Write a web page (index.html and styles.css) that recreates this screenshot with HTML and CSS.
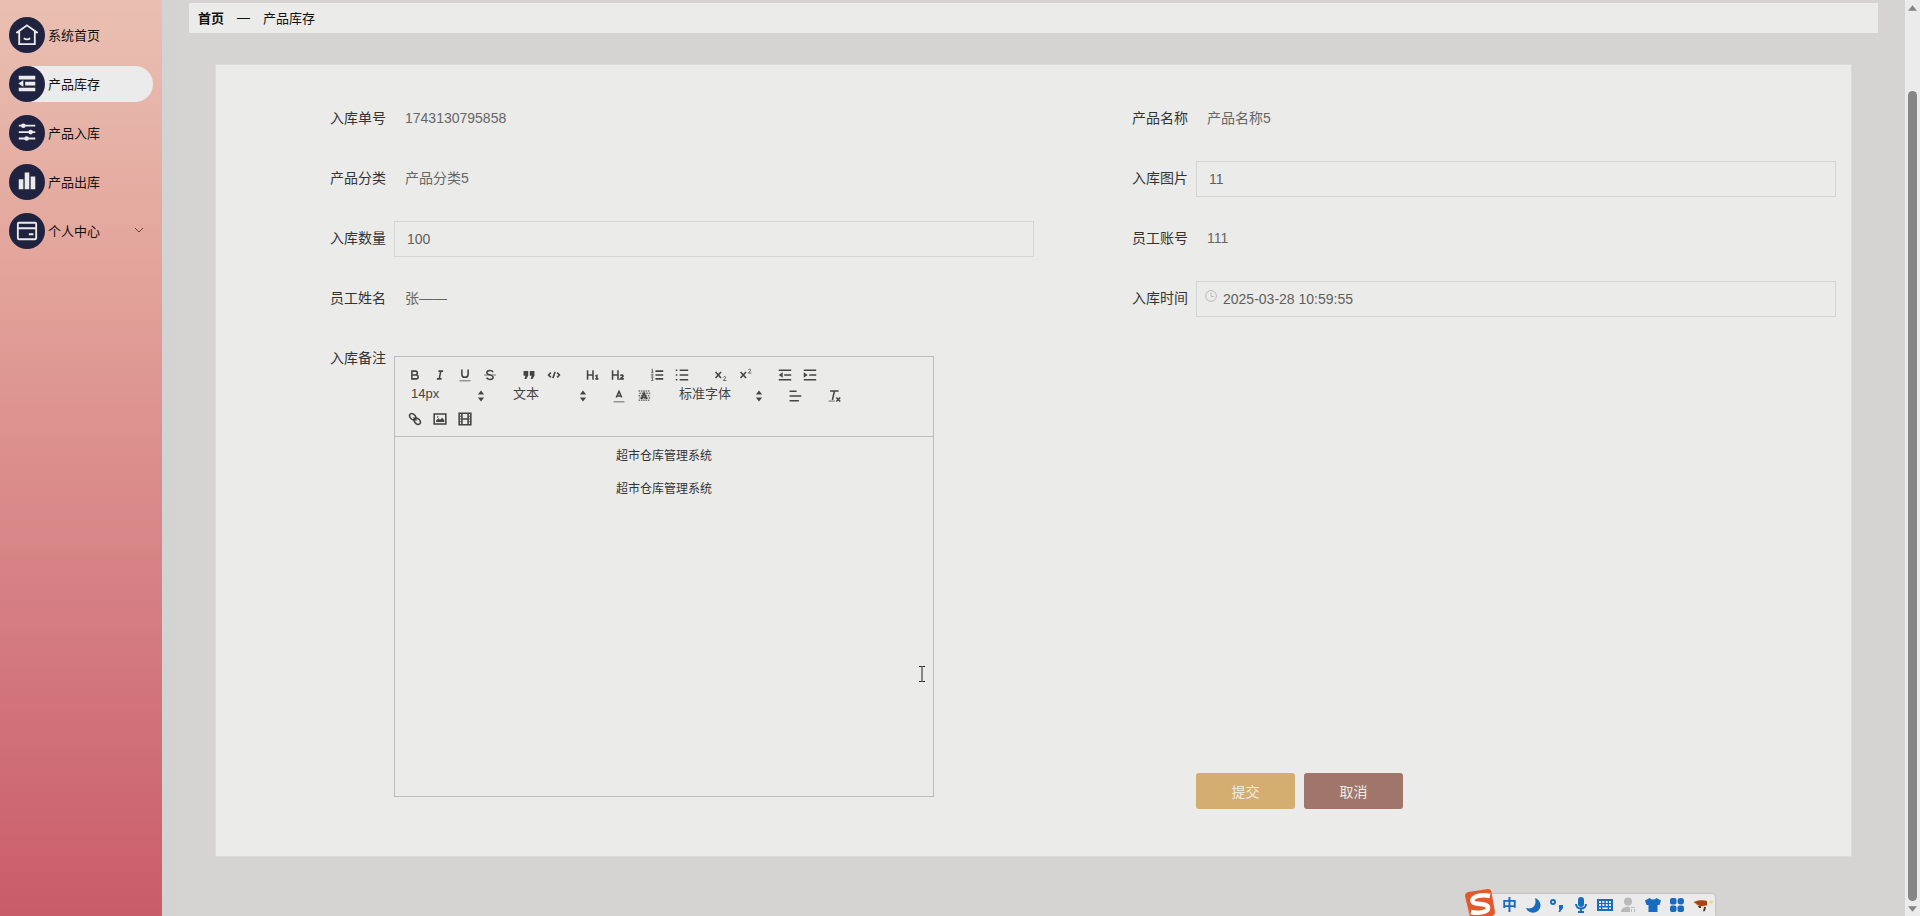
FILE: index.html
```
<!DOCTYPE html>
<html lang="zh-CN">
<head>
<meta charset="utf-8">
<meta name="viewport" content="width=device-width, initial-scale=1.0">
<title>产品库存</title>
<link rel="stylesheet" href="styles.css">
</head>
<body>
<div class="layout">
  <nav class="sidebar">
    <a class="menu-item" href="#">
      <span class="menu-icon"><svg viewBox="0 0 24 24"><path d="M12 1.500 22.500 9H20.500V22H3.500V9H1.500z" /><path d="M8.500 15.500q3.500 2.500 7 0"/></svg></span>
      <span class="menu-text">系统首页</span>
    </a>
    <a class="menu-item active" href="#">
      <span class="menu-icon"><svg viewBox="0 0 24 24"><path class="solid" d="M3 3h18v4H3zM10 9.500h11v4H10zM3 16h18v4H3zM8 8v7L2.500 11.500z"/></svg></span>
      <span class="menu-text">产品库存</span>
    </a>
    <a class="menu-item" href="#">
      <span class="menu-icon"><svg viewBox="0 0 24 24"><path d="M3 4h18M3 11h18M3 18h18"/><circle class="solid" cx="8" cy="4" r="2.500"/><circle class="solid" cx="16" cy="11" r="2.500"/><circle class="solid" cx="11.500" cy="18" r="2.500"/></svg></span>
      <span class="menu-text">产品入库</span>
    </a>
    <a class="menu-item" href="#">
      <span class="menu-icon"><svg viewBox="0 0 24 24"><path class="solid" d="M3 9h5v11H3zM9.500 1.500h5V20h-5zM16 6h5v14h-5z"/></svg></span>
      <span class="menu-text">产品出库</span>
    </a>
    <a class="menu-item" href="#">
      <span class="menu-icon"><svg viewBox="0 0 24 24"><rect x="2" y="3" width="20" height="18" rx="1"/><path d="M2 9h20M14 15.500h5"/></svg></span>
      <span class="menu-text">个人中心</span>
      <svg class="arrow" viewBox="0 0 10 10"><path d="M1 2l4 4 4-4"/></svg>
    </a>
  </nav>

  <main class="main">
    <div class="breadcrumb">
      <a href="#">首页</a>
      <span>—</span>
      <span>产品库存</span>
    </div>

    <form class="card">
      <div class="form-item">
        <span class="label">入库单号</span>
        <span class="text">1743130795858</span>
      </div>
      <div class="form-item">
        <span class="label">产品名称</span>
        <span class="text">产品名称5</span>
      </div>
      <div class="form-item">
        <span class="label">产品分类</span>
        <span class="text">产品分类5</span>
      </div>
      <div class="form-item">
        <label class="label" for="picture">入库图片</label>
        <input class="input" id="picture" type="text" value="11">
      </div>
      <div class="form-item">
        <label class="label" for="count">入库数量</label>
        <input class="input" id="count" type="text" value="100">
      </div>
      <div class="form-item">
        <span class="label">员工账号</span>
        <span class="text">111</span>
      </div>
      <div class="form-item">
        <span class="label">员工姓名</span>
        <span class="text">张——</span>
      </div>
      <div class="form-item">
        <label class="label" for="time">入库时间</label>
        <div class="date">
          <svg class="clock" viewBox="0 0 12 12"><circle cx="6" cy="6" r="5.400"/><path d="M6 2.500V6.500H9"/></svg>
          <input class="input" id="time" type="text" value="2025-03-28 10:59:55">
        </div>
      </div>

      <div class="form-item remark">
        <span class="label" id="remark">入库备注</span>
        <div class="editor">
          <div class="toolbar">
            <div class="row">
              <div class="group">
                <button type="button" aria-label="加粗"><svg viewBox="0 0 18 18"><path d="M5 4h4.500a2.500 2.500 0 0 1 0 5H5zM5 9h5.500a2.500 2.500 0 0 1 0 5H5z"/></svg></button>
                <button type="button" aria-label="斜体"><svg viewBox="0 0 18 18"><path d="M7 4h6M5 14h6M8 14l2-10"/></svg></button>
                <button type="button" aria-label="下划线"><svg viewBox="0 0 18 18"><path d="M5 2v6a4 4 0 0 0 8 0V2"/><path class="thin" d="M2 16.500h14"/></svg></button>
                <button type="button" aria-label="删除线"><svg viewBox="0 0 18 18"><path class="thin" d="M1.500 9h15"/><path d="M13 5.500C11.500 2 5 2.500 5 6c0 3.200 8 2.500 8 6 0 3.500-7 3.500-8.500.5"/></svg></button>
              </div>
              <div class="group">
                <button type="button" aria-label="引用"><svg viewBox="0 0 18 18"><path class="fill" d="M2 4h6v6L5.500 14H3l1.500-4H2zM10 4h6v6l-2.500 4H11l1.500-4H10z"/></svg></button>
                <button type="button" aria-label="代码"><svg viewBox="0 0 18 18"><path d="M5 6 2 9l3 3M13 6l3 3-3 3M10.500 5l-3 8"/></svg></button>
              </div>
              <div class="group">
                <button type="button" aria-label="标题1"><svg viewBox="0 0 18 18"><path d="M2 3v12M9 3v12M2 9h7M12 10.500l2-1V14M12 14h4"/></svg></button>
                <button type="button" aria-label="标题2"><svg viewBox="0 0 18 18"><path d="M2 3v12M9 3v12M2 9h7M12 10c1-1.500 4-1 3.500.8L12 14h4.500"/></svg></button>
              </div>
              <div class="group">
                <button type="button" aria-label="有序列表"><svg viewBox="0 0 18 18"><path d="M7 4h10M7 9h10M7 14h10"/><path class="thin" d="M2 2l1-.7V5.500M1.500 5.500h3M1.500 8h2.500l-2 2.500H4.500M1.500 12.500H4L3 14l1 2H1.500"/></svg></button>
                <button type="button" aria-label="无序列表"><svg viewBox="0 0 18 18"><path d="M6 3h11M6 9h11M6 15h11M1 3h2M1 9h2M1 15h2"/></svg></button>
              </div>
              <div class="group">
                <button type="button" aria-label="下标"><svg viewBox="0 0 18 18"><path d="M2 5l7 8M9 5l-7 8"/><path class="thin" d="M12 12c.5-1.500 3.500-1.200 3 .5L12 16h4"/></svg></button>
                <button type="button" aria-label="上标"><svg viewBox="0 0 18 18"><path d="M2 5l7 8M9 5l-7 8"/><path class="thin" d="M12 2.500c.5-1.500 3.500-1.200 3 .5L12 6.500h4"/></svg></button>
              </div>
              <div class="group">
                <button type="button" aria-label="减少缩进"><svg viewBox="0 0 18 18"><path d="M1 3h16M8 9h9M1 15h16"/><path class="fill" d="M6 5.500v7L1 9z"/></svg></button>
                <button type="button" aria-label="增加缩进"><svg viewBox="0 0 18 18"><path d="M1 3h16M8 9h9M1 15h16"/><path class="fill" d="M1 5.500v7L6 9z"/></svg></button>
              </div>
            </div>
            <div class="row pickers">
              <div class="picker">
                <select aria-label="字号"><option>14px</option></select>
                <svg viewBox="0 0 18 18"><path class="fill" d="M9 2l4 5H5zM9 16l4-5H5z"/></svg>
              </div>
              <div class="picker">
                <select aria-label="标题"><option>文本</option></select>
                <svg viewBox="0 0 18 18"><path class="fill" d="M9 2l4 5H5zM9 16l4-5H5z"/></svg>
              </div>
              <div class="group">
                <button type="button" aria-label="字体颜色"><svg viewBox="0 0 18 18"><path d="M5.500 11 9 3l3.500 8M6.500 9h5"/><path class="thin" d="M2 16.500h14"/></svg></button>
                <button type="button" aria-label="背景颜色"><svg viewBox="0 0 18 18"><path class="hatch" d="M2 2.500h14M3 5.500h14M2 8.500h14M3 11.500h14M2 14.500h14"/><path d="M5.500 13 9 5l3.500 8M6.500 11h5"/></svg></button>
              </div>
              <div class="picker font">
                <select aria-label="字体"><option>标准字体</option></select>
                <svg viewBox="0 0 18 18"><path class="fill" d="M9 2l4 5H5zM9 16l4-5H5z"/></svg>
              </div>
              <div class="group">
                <button type="button" aria-label="对齐"><svg viewBox="0 0 18 18"><path d="M2 3h9M2 9h15M2 15h12"/></svg></button>
              </div>
              <div class="group">
                <button type="button" aria-label="清除格式"><svg viewBox="0 0 18 18"><path d="M4 2.500h11M7 14l2.500-11M12 11l5 5M17 11l-5 5"/><path class="thin" d="M2 15.500h8"/></svg></button>
              </div>
            </div>
            <div class="row">
              <div class="group">
                <button type="button" aria-label="链接"><svg viewBox="0 0 18 18"><ellipse cx="6" cy="6" rx="4.500" ry="3.200" transform="rotate(45 6 6)"/><ellipse cx="12" cy="12" rx="4.500" ry="3.200" transform="rotate(45 12 12)"/><path d="M7 7l4 4"/></svg></button>
                <button type="button" aria-label="图片"><svg viewBox="0 0 18 18"><path d="M1.500 2.500h15v13h-15z"/><path class="fill" d="M4 13v-2l3-3 2 2 3-2.500 2.500 3V13z"/><circle class="fill" cx="6" cy="6.500" r="1"/></svg></button>
                <button type="button" aria-label="视频"><svg viewBox="0 0 18 18"><path d="M1.500 1.500h15v15h-15zM5 2v14M13 2v14M5 9h8"/><path class="thin" d="M2 5.500h3M2 9h3M2 12.500h3M13 5.500h3M13 9h3M13 12.500h3"/></svg></button>
              </div>
            </div>
          </div>
          <div class="content" contenteditable="true" role="textbox" aria-labelledby="remark" spellcheck="false">
            <p>超市仓库管理系统</p>
            <p>超市仓库管理系统</p>
          </div>
        </div>
      </div>

      <div class="btns">
        <button class="btn submit" type="button">提交</button>
        <button class="btn cancel" type="button">取消</button>
      </div>
    </form>
  </main>
</div>

<!-- page scrollbar -->
<div class="scrollbar">
  <svg viewBox="0 0 10 6"><path d="M5 0l5 6H0z"/></svg>
  <div class="thumb"></div>
  <svg viewBox="0 0 10 6"><path d="M0 0h10L5 6z"/></svg>
</div>

<!-- input method bar -->
<div class="ime">
  <svg class="ime-logo" viewBox="0 0 32 32"><path fill="#e2592c" d="M4 4 24 1q3 0 3.500 3L31 24q0 3-3 4L10 32q-3 0-4-3L1 8q0-3 3-4z"/><path fill="none" stroke="#fff" stroke-width="4.500" d="M26 8C18 6 8 8 8.500 13c.5 4.500 15 1.500 15.500 6.500C24.500 24 15 26 7 24"/></svg>
  <span class="ime-lang">中</span>
  <svg viewBox="0 0 16 16"><path d="M10 1a7.500 7.500 0 1 1-9 10c7 2 11-3 9-10z"/></svg>
  <svg viewBox="0 0 16 16"><circle class="ring" cx="4" cy="5" r="2"/><path d="M10 8h4v3l-3 4h-1.500l1-3H10z"/></svg>
  <svg viewBox="0 0 16 16"><rect x="5" y="0" width="6" height="10" rx="3"/><path class="ring" d="M3 7c0 6 10 6 10 0M8 11.500V15M5 15h6"/></svg>
  <svg viewBox="0 0 16 16"><path fill-rule="evenodd" d="M0 2h16v12H0zM2 4v2h2V4zm3.300 0v2h2V4zm3.400 0v2h2V4zM12 4v2h2V4zM2 7v2h2V7zm3.300 0v2h2V7zm3.400 0v2h2V7zM12 7v2h2V7zM2 10.500V12h2v-1.500zm3.300 0V12h5.400v-1.500zm6.700 0V12h2v-1.500z"/></svg>
  <svg class="off" viewBox="0 0 16 16"><circle cx="7" cy="4.500" r="4"/><path d="M0 15c0-7 14-7 14 0z"/><path class="badge" d="M9 9h6v6H9z"/><path d="M10 10h4v1h-4zM10 12h1v3h-1zM13 12h1v3h-1z"/></svg>
  <svg viewBox="0 0 16 16"><path d="M4.500 1q3.500 3 7 0L16 3.500 14.500 8H12.500v7h-9V8H1.500L0 3.500z"/></svg>
  <svg viewBox="0 0 16 16"><rect x="1" y="1" width="6.500" height="6.500" rx="2"/><rect x="8.500" y="1" width="6.500" height="6.500" rx="3"/><rect x="1" y="8.500" width="6.500" height="6.500" rx="2"/><rect x="8.500" y="8.500" width="6.500" height="6.500" rx="2"/></svg>
  <svg class="wide" viewBox="0 0 20 16"><path fill="#efb45c" d="M0 5l6-2 8 1v5l-8 1z"/><path fill="#a4441f" d="M1 5q6-3 13-1v4q-6 2-9 0z"/><path fill="#493832" d="M5 9h3v2H6zM11 10h2l-1 4-2 .5z"/><circle fill="#efd681" cx="18" cy="5" r="1.800"/></svg>
</div>

<svg class="cursor" viewBox="0 0 8 18"><path d="M1 1.500h2.500L4 2l.5-.5H7M4 2v14M1 16.500h2.500L4 16l.5.500H7"/></svg>
</body>
</html>
```
FILE: styles.css
```
* {
  box-sizing: border-box;
}
body {
  margin: 0;
  background: #d6d3d3;
  color: #222;
  font-family: "Liberation Sans", "Noto Sans CJK SC", sans-serif;
  font-size: 14px;
  overflow: hidden;
}
a {
  color: inherit;
  text-decoration: none;
}
button, input, select {
  font: inherit;
}
.layout {
  display: flex;
  min-height: 100vh;
  padding-right: 15px;
}

/* sidebar */
.sidebar {
  width: 162px;
  flex: none;
  padding: 17px 9px;
  background: linear-gradient(#e9c0b2, #e3a59c 28%, #c95c69);
  display: flex;
  flex-direction: column;
  gap: 13px;
}
.menu-item {
  display: flex;
  align-items: center;
  gap: 3px;
  height: 36px;
  border-radius: 18px;
  font-size: 13px;
  color: #111;
}
.menu-item.active {
  background: #ebebeb;
}
.menu-text {
  padding-bottom: 2px;
}
.menu-icon {
  width: 36px;
  height: 36px;
  border-radius: 50%;
  background: #20233f;
  display: flex;
  align-items: center;
  justify-content: center;
}
.menu-icon svg {
  width: 22px;
  height: 22px;
  fill: none;
  stroke: #ebebeb;
  stroke-width: 2;
}
.menu-icon .solid {
  fill: #ebebeb;
  stroke: none;
}
.arrow {
  width: 10px;
  height: 10px;
  margin-left: auto;
  margin-right: 9px;
  fill: none;
  stroke: #5c4444;
}

/* main */
.main {
  flex: 1;
  min-width: 0;
  padding: 3px 27px 0 19px;
  border-left: 8px solid #d2d3d3;
}
.breadcrumb {
  height: 30px;
  padding: 0 9px 2px;
  background: #ebebea;
  display: flex;
  align-items: center;
  gap: 13px;
  font-size: 13px;
  color: #111;
}
.breadcrumb a {
  font-weight: bold;
}
.card {
  margin: 32px 27px 0;
  padding: 36px 15px 47px 18px;
  background: #ebebea;
  box-shadow: 0 0 0 1px #dadada;
  display: grid;
  grid-template-columns: 1fr 1fr;
  gap: 24px 2px;
}
.form-item {
  display: flex;
  min-height: 36px;
  line-height: 35px;
}
.label {
  width: 160px;
  flex: none;
  padding-right: 8px;
  text-align: right;
  color: #333;
}
.text {
  padding-left: 11px;
  color: #666;
}
.input {
  flex: 1;
  width: 100%;
  height: 36px;
  padding: 0 12px 1px;
  border: 1px solid #d3d5d7;
  background: transparent;
  color: #606060;
  outline: none;
}
.date {
  flex: 1;
  position: relative;
  display: flex;
}
.date .input {
  padding-left: 26px;
}
.clock {
  position: absolute;
  left: 9px;
  top: 9px;
  width: 12px;
  height: 12px;
  fill: none;
  stroke: #bbb;
}

/* editor */
.remark {
  margin-bottom: 12px;
}
.editor {
  width: 540px;
  height: 441px;
  margin-top: 15px;
  border: 1px solid #babdbe;
  line-height: 20px;
}
.toolbar {
  padding: 7px 7px 6px;
  border-bottom: 1px solid #babdbe;
}
.row {
  display: flex;
  gap: 14px;
  height: 22px;
}
.row.pickers {
  height: 20px;
  margin-bottom: 2px;
}
.group {
  display: flex;
}
.toolbar button {
  width: 25px;
  height: 100%;
  padding: 0;
  border: none;
  background: none;
  display: flex;
  align-items: center;
  justify-content: center;
}
.toolbar svg {
  width: 14px;
  height: 14px;
  fill: none;
  stroke: #444;
  stroke-width: 2;
}
.toolbar .thin {
  stroke-width: 1;
}
.toolbar .fill {
  fill: #444;
  stroke: none;
}
.toolbar .hatch {
  stroke: #777;
  stroke-dasharray: 2 1;
}
.picker {
  position: relative;
  width: 88px;
}
.picker.font {
  width: 98px;
}
.picker select {
  appearance: none;
  display: block;
  width: 100%;
  height: 16px;
  padding: 0 9px;
  border: none;
  background: none;
  color: #444;
  font-size: 13px;
  line-height: 16px;
}
.picker svg {
  position: absolute;
  right: 2px;
  top: 3px;
  pointer-events: none;
}
.content {
  padding: 9px 13px;
  font-size: 12px;
  text-align: center;
  color: #333;
  outline: none;
}
.content p {
  margin: 0 0 13px;
}

/* buttons */
.btns {
  align-self: end;
  display: flex;
  gap: 9px;
  padding-left: 160px;
}
.btn {
  width: 99px;
  height: 36px;
  border: none;
  border-radius: 3px;
  color: #f0eae4;
}
.submit {
  background: #d4ad70;
}
.cancel {
  background: #a0756a;
}

/* scrollbar */
.scrollbar {
  position: fixed;
  top: 0;
  right: 0;
  bottom: 0;
  width: 15px;
  padding: 5px 3px 4px;
  background: #ebebeb;
  display: flex;
  flex-direction: column;
  align-items: center;
}
.scrollbar svg {
  width: 9px;
  height: 6px;
  fill: #858585;
}
.thumb {
  flex: 1;
  width: 9px;
  margin: 80px 0 5px;
  border-radius: 5px;
  background: #868686;
}

/* input method bar */
.ime {
  position: fixed;
  right: 205px;
  bottom: 0;
  width: 235px;
  height: 22px;
  padding: 0 2px 0 22px;
  border-radius: 3px 3px 0 0;
  background: #ebebeb;
  box-shadow: 0 0 2px #999;
  display: flex;
  align-items: center;
  justify-content: space-between;
}
.ime svg {
  width: 16px;
  height: 16px;
  fill: #176cc0;
}
.ime .wide {
  width: 20px;
}
.ime .ring {
  fill: none;
  stroke: #176cc0;
  stroke-width: 2;
}
.ime .ime-logo {
  position: absolute;
  left: -16px;
  top: -6px;
  width: 32px;
  height: 32px;
}
.ime .off {
  fill: #b9b9b9;
}
.ime .badge {
  fill: #ebebeb;
}
.ime-lang {
  color: #176cc0;
  font-size: 15px;
  line-height: 20px;
  font-weight: bold;
}
.cursor {
  position: fixed;
  left: 918px;
  top: 665px;
  width: 8px;
  height: 18px;
  fill: none;
  stroke: #222;
}
```
